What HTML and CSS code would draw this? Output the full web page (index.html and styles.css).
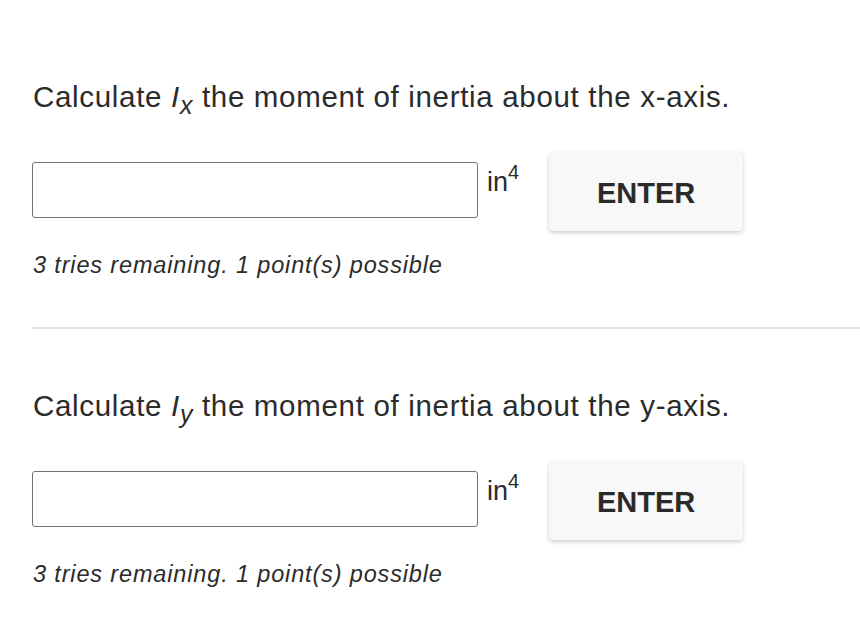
FILE: index.html
```html
<!DOCTYPE html>
<html>
<head>
<meta charset="utf-8">
<link rel="stylesheet" href="styles.css">
</head>
<body>
<div class="page">
  <section class="question">
    <h2 class="prompt">Calculate <i>I</i><sub>x</sub> the moment of inertia about the x-axis.</h2>
    <div class="answer-row">
      <input class="answer" type="text">
      <span class="unit">in<sup>4</sup></span>
      <button class="enter">ENTER</button>
    </div>
    <p class="tries">3 tries remaining. 1 point(s) possible</p>
  </section>
  <hr class="divider">
  <section class="question second">
    <h2 class="prompt">Calculate <i>I</i><sub>y</sub> the moment of inertia about the y-axis.</h2>
    <div class="answer-row">
      <input class="answer" type="text">
      <span class="unit">in<sup>4</sup></span>
      <button class="enter">ENTER</button>
    </div>
    <p class="tries">3 tries remaining. 1 point(s) possible</p>
  </section>
</div>
</body>
</html>
```
FILE: styles.css
```css
html, body {
  margin: 0;
  padding: 0;
  background: #ffffff;
}
body {
  font-family: "Liberation Sans", Arial, sans-serif;
  color: #2b2b2b;
}
.page {
  padding: 80px 0 0 32px;
}
.prompt {
  margin: 0;
  font-size: 29.5px;
  font-weight: 400;
  letter-spacing: 0.68px;
  line-height: 34px;
  color: #2b2b2b;
  padding-left: 1px;
}
.prompt i {
  font-style: italic;
}
.prompt sub {
  font-size: 25px;
  font-style: italic;
  line-height: 0;
  vertical-align: -7px;
}
.answer-row {
  display: flex;
  align-items: flex-start;
  margin-top: 38px;
}
.answer {
  box-sizing: border-box;
  width: 446px;
  height: 56px;
  margin: 10px 0 0 0;
  border: 1.5px solid #727272;
  border-radius: 3px;
  background: #fff;
  padding: 0 10px;
  font: inherit;
  font-size: 22px;
}
.unit {
  margin: 15px 0 0 9px;
  font-size: 27px;
  line-height: 30px;
  color: #2b2b2b;
}
.unit sup {
  font-size: 20px;
  line-height: 0;
  vertical-align: 12px;
}
.enter {
  box-sizing: border-box;
  width: 194px;
  height: 79px;
  margin-left: 30px;
  border: none;
  border-radius: 4px;
  background: #f8f8f8;
  box-shadow: 0 2px 4px rgba(0, 0, 0, 0.18), 0 0 1px rgba(0, 0, 0, 0.08);
  font-family: "Liberation Sans", Arial, sans-serif;
  font-size: 29px;
  font-weight: 700;
  color: #2a2a2a;
  padding: 4px 0 0 0;
}
.tries {
  margin: 21px 0 0 0;
  font-size: 23.5px;
  letter-spacing: 0.85px;
  line-height: 26px;
  font-style: italic;
  color: #2b2b2b;
  padding-left: 1px;
}
.divider {
  margin: 49px 0 0 0;
  border: none;
  height: 2px;
  background: #e0e0e0;
}
.second {
  margin-top: 60px;
}
```
